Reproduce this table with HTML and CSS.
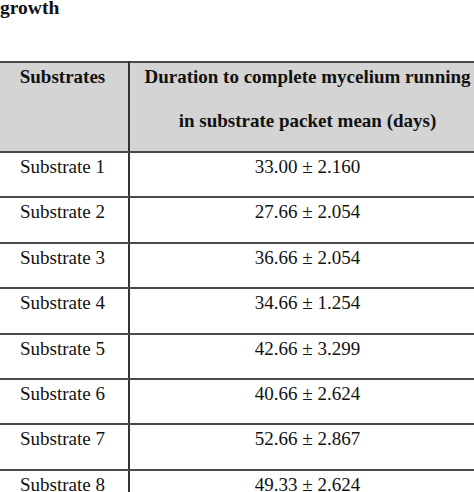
FILE: index.html
```html
<!DOCTYPE html>
<html>
<head>
<meta charset="utf-8">
<link rel="stylesheet" href="styles.css">
</head>
<body>
<div class="page">
  <div class="title">growth</div>
  <table class="data">
    <colgroup><col class="c1"><col class="c2"></colgroup>
    <thead>
      <tr>
        <th>Substrates</th>
        <th>Duration to complete mycelium running<br><span class="l2">in substrate packet mean (days)</span></th>
      </tr>
    </thead>
    <tbody>
      <tr><td>Substrate 1</td><td>33.00 ± 2.160</td></tr>
      <tr><td>Substrate 2</td><td>27.66 ± 2.054</td></tr>
      <tr><td>Substrate 3</td><td>36.66 ± 2.054</td></tr>
      <tr><td>Substrate 4</td><td>34.66 ± 1.254</td></tr>
      <tr><td>Substrate 5</td><td>42.66 ± 3.299</td></tr>
      <tr><td>Substrate 6</td><td>40.66 ± 2.624</td></tr>
      <tr><td>Substrate 7</td><td>52.66 ± 2.867</td></tr>
      <tr><td>Substrate 8</td><td>49.33 ± 2.624</td></tr>
    </tbody>
  </table>
</div>
</body>
</html>
```
FILE: styles.css
```css
html, body {
  margin: 0;
  padding: 0;
  background: #ffffff;
  overflow: hidden;
}
.page {
  width: 474px;
  height: 492px;
  overflow: hidden;
  font-family: "Liberation Serif", "Times New Roman", serif;
  color: #111;
}
.title {
  font-weight: bold;
  font-size: 19.5px;
  line-height: 23px;
  margin-top: -4px;
  margin-left: 0;
}
.data {
  border-collapse: collapse;
  table-layout: fixed;
  width: 488px;
  margin-left: -3px;
  margin-top: 42px;
  font-size: 19px;
}
.c1 { width: 132px; }
.c2 { width: 356px; }
.data th, .data td {
  padding: 2px 0 0 0;
  text-align: center;
  vertical-align: top;
  line-height: 23px;
  white-space: nowrap;
  border-top: 2px solid #4a4a4a;
  border-bottom: 2px solid #4a4a4a;
}
.data th:first-child, .data td:first-child {
  border-right: 2px solid #333;
}
.data th {
  background: #d4d4d4;
  font-weight: bold;
  height: 86px;
}
.data th .l2 {
  display: inline-block;
  margin-top: 21px;
}
.data td {
  height: 41.4px;
}
```
